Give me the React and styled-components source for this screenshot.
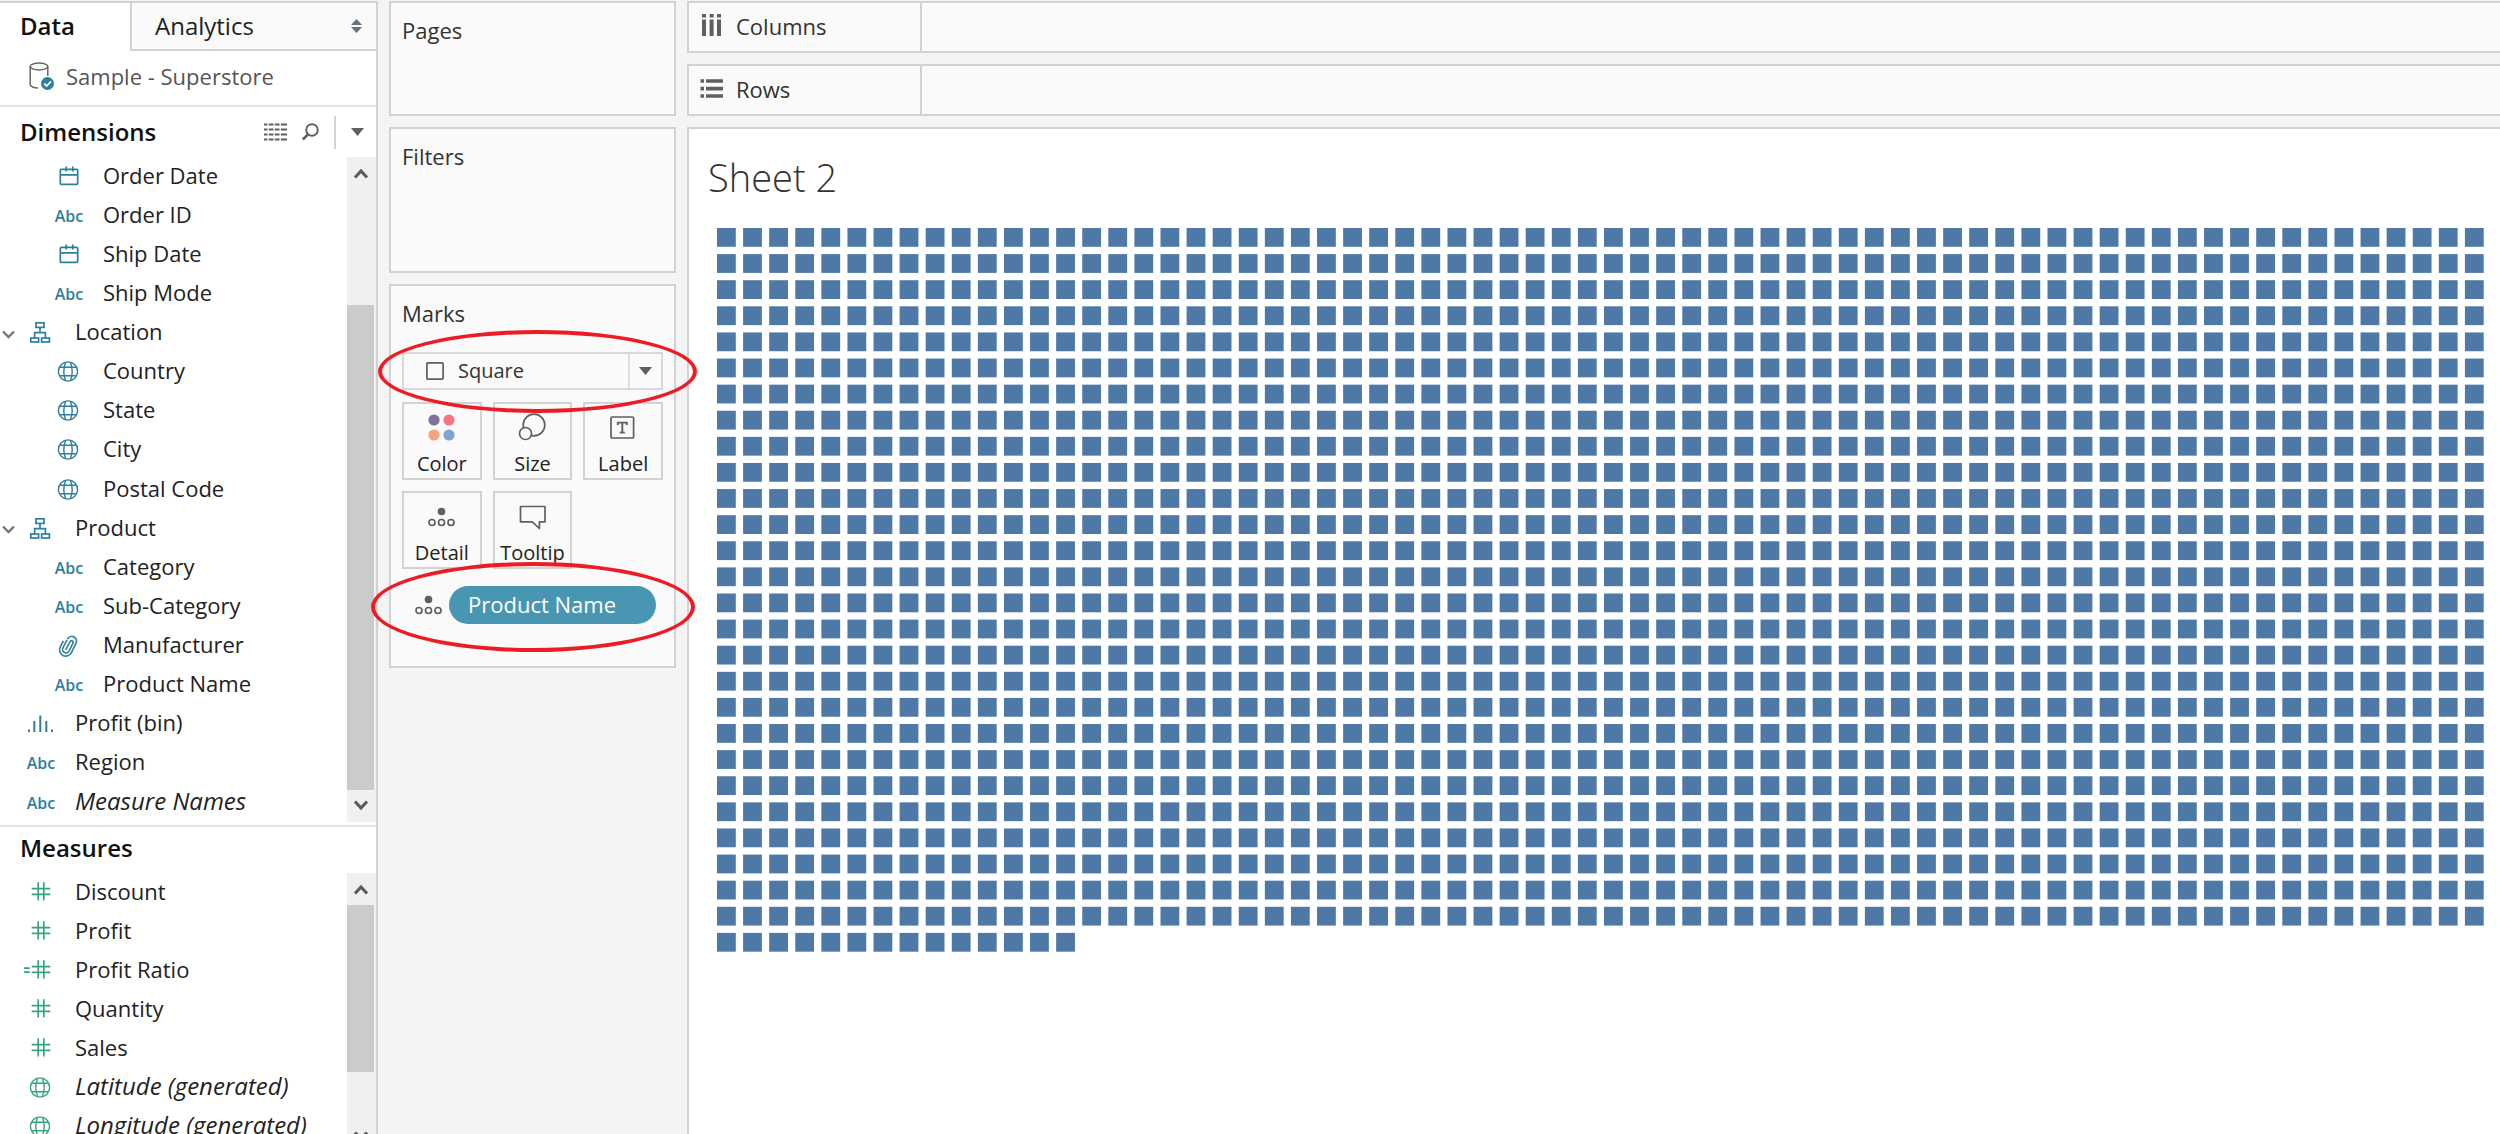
import React from "react";
import styled, { createGlobalStyle, css } from "styled-components";

const FONT = '"Open Sans", "Noto Sans", sans-serif';
const LINE = "#d2d2d2";
const TEAL = "#2d7f9d";
const GREEN = "#35a57c";
const INK = "#5f5f5f";

const GlobalStyle = createGlobalStyle`
  *, *::before, *::after { box-sizing: border-box; }
  body { margin: 0; background: #f4f4f4; font-family: ${FONT}; color: #222; }
  button, select { font: inherit; color: inherit; background: none; border: 0; padding: 0; margin: 0; }
  h1, h2, p, ul { margin: 0; padding: 0; font-weight: inherit; }
  svg { display: block; flex: none; overflow: visible; }
`;

const Workbook = styled.main`
  display: flex;
  height: 100vh;
  overflow: hidden;
  padding-top: 1px;
`;

/* ---------- data pane ---------- */

const DataPane = styled.aside`
  display: flex;
  flex-direction: column;
  flex: none;
  width: 378px;
  background: #fff;
  border-right: 2px solid ${LINE};
`;

const Tabs = styled.div`
  display: flex;
  flex: none;
  height: 50px;
`;

const Tab = styled.button`
  display: flex;
  align-items: center;
  justify-content: space-between;
  border-top: 2px solid ${LINE};
  font-size: 24px;
  line-height: 30px;
  ${(p) =>
    p.$active
      ? css`
          width: 130px;
          padding: 0 0 2px 20px;
          font-weight: 600;
          color: #111;
        `
      : css`
          flex: 1;
          padding: 0 14px 0 23px;
          border-left: 2px solid ${LINE};
          border-bottom: 2px solid ${LINE};
          background: #fafafa;
        `}
`;

const Source = styled.button`
  display: flex;
  align-items: center;
  flex: none;
  gap: 12px;
  height: 56px;
  padding: 0 0 4px 29px;
  border-bottom: 2px solid #e2e2e2;
  font-size: 22px;
  line-height: 30px;
  color: #555;
`;

const Section = styled.section`
  display: flex;
  flex-direction: column;
  min-height: 0;
  flex: ${(p) => (p.$fill ? "1" : "none")};
  ${(p) =>
    !p.$fill &&
    css`
      padding-bottom: 3px;
      border-bottom: 2px solid #e2e2e2;
    `}
`;

const SectionHead = styled.header`
  display: flex;
  align-items: center;
  flex: none;
  height: ${(p) => (p.$tools ? "50px" : "46px")};
  padding: ${(p) => (p.$tools ? "0 12px 0 20px" : "0 12px 4px 20px")};
`;

const SectionTitle = styled.h2`
  flex: 1;
  font-size: 24px;
  line-height: 32px;
  font-weight: 600;
  color: #111;
`;

const Tool = styled.button`
  display: flex;
  margin-left: 15px;
`;

const ToolDivider = styled.span`
  width: 2px;
  height: 33px;
  margin-left: 15px;
  background: ${LINE};
`;

const FieldArea = styled.div`
  display: flex;
  flex: none;
  height: ${(p) => (p.$fill ? "280px" : "665px")};
`;

const FieldList = styled.ul`
  display: flex;
  flex-direction: column;
  flex: 1;
  min-width: 0;
  overflow: hidden;
  list-style: none;
`;

const Field = styled.li`
  display: flex;
  align-items: center;
  flex: ${(p) => (p.$stretch ? "1" : "0 0 39px")};
  padding: 0 0 2px ${(p) => (p.$level ? "51px" : "23px")};
  position: relative;
  white-space: nowrap;
`;

const FieldName = styled.span`
  padding-bottom: 2px;
  font-size: ${(p) => (p.$generated ? "24px" : "22px")};
  line-height: 30px;
  font-style: ${(p) => (p.$generated ? "italic" : "normal")};
`;

const Twisty = styled.button`
  position: absolute;
  left: 2px;
  top: 16px;
`;

const IconSlot = styled.span`
  display: flex;
  align-items: center;
  justify-content: center;
  flex: none;
  width: 36px;
  height: 30px;
  margin-right: 16px;
  color: ${(p) => (p.$measure ? GREEN : TEAL)};
`;

const Abc = styled.span`
  padding-top: 2px;
  font-size: 16px;
  line-height: 24px;
  font-weight: 600;
`;

const Scrollbar = styled.div`
  display: flex;
  flex-direction: column;
  flex: none;
  width: 29px;
  padding-right: 2px;
  background: #f0f0f0;
`;

const ScrollButton = styled.button`
  display: flex;
  align-items: center;
  justify-content: center;
  flex: none;
  height: 32px;
`;

const ScrollSpace = styled.div`
  flex: ${(p) => p.$grow};
`;

const ScrollThumb = styled.div`
  flex: ${(p) => p.$grow};
  background: #cbcbcb;
`;

/* ---------- cards ---------- */

const Cards = styled.div`
  display: flex;
  flex-direction: column;
  flex: none;
  gap: 11px;
  width: 309px;
  padding: 0 11px;
`;

const Card = styled.section`
  position: relative;
  flex: none;
  min-height: ${(p) => p.$height};
  padding: 12px 11px 0;
  border: 2px solid ${LINE};
  background: #fafafa;
`;

const CardTitle = styled.h2`
  font-size: 22px;
  line-height: 30px;
  color: #333;
`;

const MarkType = styled.label`
  display: flex;
  align-items: center;
  height: 38px;
  margin-top: 24px;
  border: 2px solid #d8d8d8;
  padding-left: 22px;
`;

const MarkSelect = styled.select`
  appearance: none;
  flex: 1;
  min-width: 0;
  padding-left: 14px;
  font-size: 20px;
  line-height: 30px;
  color: #333;
`;

const MarkArrow = styled.span`
  display: flex;
  align-items: center;
  justify-content: center;
  align-self: stretch;
  width: 33px;
  border-left: 2px solid #dedede;
`;

const Shelves = styled.div`
  display: grid;
  grid-template-columns: repeat(3, 1fr);
  gap: 11px;
  margin-top: 12px;
`;

const ShelfButton = styled.button`
  display: flex;
  flex-direction: column;
  align-items: center;
  justify-content: space-between;
  height: 78px;
  padding: 9px 0 0;
  border: 2px solid ${LINE};
  font-size: 20px;
  line-height: 28px;
  color: #222;
`;

const PillRow = styled.div`
  display: flex;
  align-items: center;
  gap: 7px;
  margin-top: 17px;
  padding: 0 7px 0 13px;
`;

const Pill = styled.button`
  flex: 1;
  height: 38px;
  padding: 0 0 2px 19px;
  border-radius: 19px;
  background: #4996b2;
  color: #fff;
  font-size: 22px;
  line-height: 30px;
  font-weight: 500;
  text-align: left;
`;

const Ring = styled.span`
  position: absolute;
  left: ${(p) => p.$left};
  top: ${(p) => p.$top};
  width: ${(p) => p.$width};
  height: ${(p) => p.$height};
  border: 4px solid #ed1c24;
  border-radius: 50%;
  pointer-events: none;
  z-index: 2;
`;

/* ---------- sheet ---------- */

const Worksheet = styled.div`
  display: flex;
  flex-direction: column;
  flex: 1;
  min-width: 0;
  gap: 11px;
`;

const Shelf = styled.div`
  display: flex;
  flex: none;
  height: 52px;
  border: 2px solid ${LINE};
  border-right: 0;
  background: #fafafa;
`;

const ShelfLabel = styled.div`
  display: flex;
  align-items: center;
  gap: 12px;
  width: 233px;
  padding: 0 0 2px 11px;
  border-right: 2px solid ${LINE};
  font-size: 22px;
  line-height: 30px;
  color: #333;
`;

const View = styled.section`
  flex: 1;
  min-height: 0;
  padding: 24px 9px 0 19px;
  border: 2px solid ${LINE};
  border-right: 0;
  border-bottom: 0;
  background: #fff;
`;

const ViewTitle = styled.h1`
  font-size: 38px;
  line-height: 48px;
  font-weight: 300;
  color: #333;
`;

const Chart = styled.svg`
  width: 100%;
  height: auto;
  margin-top: 27px;
  padding-left: 9px;
  fill: #4e79a7;
`;

/* ---------- icons ---------- */

const Svg = ({ w, h, children, ...rest }) => (
  <svg width={w} height={h} viewBox={`0 0 ${w} ${h}`} fill="none" stroke="currentColor" strokeWidth="1.7" aria-hidden="true" {...rest}>
    {children}
  </svg>
);

const CalendarIcon = () => (
  <Svg w={36} h={30}>
    <rect x="9.3" y="8.3" width="17.4" height="15" rx="1" />
    <path d="M9.3 13.8H26.7M15.2 5.5V10.5M21.8 5.5V10.5" />
  </Svg>
);

const GlobeIcon = () => (
  <Svg w={36} h={30} strokeWidth="1.4">
    <circle cx="17" cy="15.5" r="9.6" />
    <path d="M8.3 11.3H25.7M8.3 19.7H25.7M14.6 6.2C12.4 12 12.4 19 14.6 24.8M19.4 6.2C21.6 12 21.6 19 19.4 24.8" />
  </Svg>
);

const HierarchyIcon = () => (
  <Svg w={36} h={30}>
    <rect x="13" y="5.8" width="8" height="4.6" />
    <rect x="7.8" y="21" width="7.8" height="4" />
    <rect x="18.6" y="21" width="7.8" height="4" />
    <path d="M17 10.4V15.6M11.6 21V15.6H22.4V21" />
  </Svg>
);

const ClipIcon = () => (
  <Svg w={36} h={30} strokeWidth="1.6">
    <g transform="translate(17 15.5) rotate(27)">
      <path d="M3.4 -5.5V4.5A3.4 3.4 0 0 1 -3.4 4.5V-4.5M0 5V-4.2A1.8 1.8 0 0 1 3.4 -5M-6.2 -2V5A6.2 6.2 0 0 0 6.2 5V-5.5A4.8 4.8 0 0 0 -3.4 -5.5" />
    </g>
  </Svg>
);

const BinIcon = () => (
  <Svg w={36} h={30} strokeWidth="2">
    <path d="M6 21.4V24M11.3 13V24M17.3 7.5V24M23.3 13V24M29 21.4V24" />
  </Svg>
);

const HashIcon = ({ calculated }) => (
  <Svg w={36} h={30}>
    <path d="M8.7 11.6H27.3M8.7 17.4H27.3M15.2 5.2V23.5M20.8 5.2V23.5" />
    {calculated && <path d="M1 13.2H6.8M1 17.2H6.8" />}
  </Svg>
);

const ICONS = {
  date: <CalendarIcon />,
  text: <Abc>Abc</Abc>,
  geo: <GlobeIcon />,
  tree: <HierarchyIcon />,
  clip: <ClipIcon />,
  bin: <BinIcon />,
  number: <HashIcon />,
  calc: <HashIcon calculated />,
};

const Chevron = ({ up }) => (
  <Svg w={14} h={12} stroke="#5c5c5c" strokeWidth="3.2">
    <path d={up ? "M1 10.5L7 4L13 10.5" : "M1 1.5L7 8L13 1.5"} />
  </Svg>
);

const Caret = () => (
  <svg width="13" height="8" viewBox="0 0 13 8" aria-hidden="true">
    <path d="M0 0H13L6.5 8Z" fill={INK} />
  </svg>
);

const DetailIcon = () => (
  <Svg w={27} h={20} stroke={INK} strokeWidth="1.7">
    <circle cx="13.5" cy="4.5" r="3.8" fill={INK} stroke="none" />
    <circle cx="4" cy="15.5" r="3" />
    <circle cx="13.5" cy="15.5" r="3" />
    <circle cx="23" cy="15.5" r="3" />
  </Svg>
);

const SHELF_ICONS = {
  Color: (
    <svg width="28" height="28" viewBox="0 0 28 28" aria-hidden="true">
      <circle cx="6" cy="7" r="5.6" fill="#84709a" />
      <circle cx="21" cy="7" r="5.6" fill="#f77583" />
      <circle cx="6" cy="22" r="5.6" fill="#f2a57c" />
      <circle cx="21" cy="22" r="5.6" fill="#80a4cb" />
    </svg>
  ),
  Size: (
    <Svg w={28} h={28} stroke={INK}>
      <circle cx="16" cy="12" r="10.8" />
      <circle cx="7.5" cy="20.5" r="6" fill="#fafafa" />
    </Svg>
  ),
  Label: (
    <Svg w={26} h={28} stroke={INK}>
      <rect x="1" y="4" width="22.6" height="21" rx="1" />
      <path d="M7.8 12V9.6H16.8V12M12.3 9.6V19.4M9.8 19.6H14.8" strokeWidth="1.9" />
    </Svg>
  ),
  Detail: (
    <Svg w={27} h={28} stroke={INK}>
      <circle cx="13.5" cy="9.5" r="3.8" fill={INK} stroke="none" />
      <circle cx="4" cy="20.5" r="3" />
      <circle cx="13.5" cy="20.5" r="3" />
      <circle cx="23" cy="20.5" r="3" />
    </Svg>
  ),
  Tooltip: (
    <Svg w={28} h={28} stroke={INK}>
      <path d="M2.5 4.5H27V19.8H21.4V26.5L14.2 19.8H2.5Z" strokeLinejoin="round" />
    </Svg>
  ),
};

/* ---------- data ---------- */

const DIMENSIONS = [
  ["Order Date", "date", 1],
  ["Order ID", "text", 1],
  ["Ship Date", "date", 1],
  ["Ship Mode", "text", 1],
  ["Location", "tree", 0],
  ["Country", "geo", 1],
  ["State", "geo", 1],
  ["City", "geo", 1],
  ["Postal Code", "geo", 1],
  ["Product", "tree", 0],
  ["Category", "text", 1],
  ["Sub-Category", "text", 1],
  ["Manufacturer", "clip", 1],
  ["Product Name", "text", 1],
  ["Profit (bin)", "bin", 0],
  ["Region", "text", 0],
  ["Measure Names", "text", 0, true],
];

const MEASURES = [
  ["Discount", "number", 0],
  ["Profit", "number", 0],
  ["Profit Ratio", "calc", 0],
  ["Quantity", "number", 0],
  ["Sales", "number", 0],
  ["Latitude (generated)", "geo", 0, true],
  ["Longitude (generated)", "geo", 0, true],
];

const PRODUCTS = 1850;
const PER_ROW = 68;
const ROWS = Math.ceil(PRODUCTS / PER_ROW);
const CHART_W = 1774;
const CHART_H = 731;

function Fields({ items, measure, fill, scroll }) {
  return (
    <FieldArea $fill={fill}>
      <FieldList>
        {items.map(([name, icon, level, generated]) => (
          <Field key={name} $level={level} $stretch={!fill}>
            {icon === "tree" && (
              <Twisty aria-label={`Collapse ${name}`}>
                <Svg w={13} h={9} stroke="#777" strokeWidth="2.4">
                  <path d="M1 1.5L6.5 7L12 1.5" />
                </Svg>
              </Twisty>
            )}
            <IconSlot $measure={measure}>{ICONS[icon]}</IconSlot>
            <FieldName $generated={generated}>{name}</FieldName>
          </Field>
        ))}
      </FieldList>
      <Scrollbar>
        <ScrollButton aria-label="Scroll up"><Chevron up /></ScrollButton>
        <ScrollSpace $grow={scroll[0]} />
        <ScrollThumb $grow={scroll[1]} />
        <ScrollSpace $grow={scroll[2]} />
        <ScrollButton aria-label="Scroll down"><Chevron /></ScrollButton>
      </Scrollbar>
    </FieldArea>
  );
}

function MarkGrid() {
  const stepX = CHART_W / PER_ROW;
  const stepY = CHART_H / ROWS;
  return (
    <Chart viewBox={`0 0 ${CHART_W} ${CHART_H}`} role="img" aria-label="One square per product">
      {Array.from({ length: PRODUCTS }, (_, i) => (
        <rect key={i} x={(i % PER_ROW) * stepX} y={Math.floor(i / PER_ROW) * stepY} width="18.8" height="18.8" />
      ))}
    </Chart>
  );
}

export default function App() {
  return (
    <>
      <GlobalStyle />
      <Workbook>
        <DataPane>
          <Tabs>
            <Tab $active>Data</Tab>
            <Tab>
              Analytics
              <svg width="11" height="14" viewBox="0 0 11 14" aria-hidden="true">
                <path d="M0 6L5.5 0L11 6ZM0 8H11L5.5 14Z" fill="#66727e" />
              </svg>
            </Tab>
          </Tabs>
          <Source>
            <Svg w={25} h={28} stroke="#666" strokeWidth="1.5">
              <ellipse cx="10" cy="4.5" rx="8.8" ry="3.4" />
              <path d="M1.2 4.5V22.5C1.2 24.5 5 26 9 26M18.8 4.5V14" />
              <circle cx="18.5" cy="21.5" r="6.5" fill={TEAL} stroke="none" />
              <path d="M15.2 21.6L17.7 24L22 19.4" stroke="#fff" strokeWidth="1.8" />
            </Svg>
            Sample - Superstore
          </Source>
          <Section>
            <SectionHead $tools>
              <SectionTitle>Dimensions</SectionTitle>
              <Tool aria-label="View as list">
                <Svg w={23} h={18} stroke={INK} strokeWidth="1.8">
                  <path d="M0 1.5H23M0 6.5H23M0 11.5H23M0 16.5H23" strokeDasharray="3.5 1.3 4.7 1.3 4.7 1.3 6.2 1" />
                </Svg>
              </Tool>
              <Tool aria-label="Find field">
                <Svg w={17} h={18} stroke={INK} strokeWidth="1.9">
                  <circle cx="10" cy="7" r="5.8" />
                  <path d="M6 11.3L0.8 16.5" strokeWidth="2.6" />
                </Svg>
              </Tool>
              <ToolDivider />
              <Tool aria-label="Dimensions menu"><Caret /></Tool>
            </SectionHead>
            <Fields items={DIMENSIONS} scroll={[116, 485, 0]} />
          </Section>
          <Section $fill>
            <SectionHead>
              <SectionTitle>Measures</SectionTitle>
            </SectionHead>
            <Fields items={MEASURES} measure fill scroll={[0, 167, 49]} />
          </Section>
        </DataPane>

        <Cards>
          <Card $height="115px"><CardTitle>Pages</CardTitle></Card>
          <Card $height="146px"><CardTitle>Filters</CardTitle></Card>
          <Card $height="384px">
            <CardTitle>Marks</CardTitle>
            <MarkType>
              <Svg w={18} h={18} stroke={INK}>
                <rect x="0.9" y="0.9" width="16.2" height="16.2" rx="1" />
              </Svg>
              <MarkSelect aria-label="Mark type" defaultValue="Square">
                <option>Square</option>
              </MarkSelect>
              <MarkArrow><Caret /></MarkArrow>
            </MarkType>
            <Shelves>
              {Object.entries(SHELF_ICONS).map(([name, icon]) => (
                <ShelfButton key={name}>
                  {icon}
                  {name}
                </ShelfButton>
              ))}
            </Shelves>
            <PillRow>
              <DetailIcon />
              <Pill>Product Name</Pill>
            </PillRow>
            <Ring $left="-13px" $top="44px" $width="319px" $height="83px" />
            <Ring $left="-20px" $top="276px" $width="324px" $height="90px" />
          </Card>
        </Cards>

        <Worksheet>
          <Shelf>
            <ShelfLabel>
              <svg width="24" height="26" viewBox="0 0 24 26" aria-hidden="true">
                <path d="M2 1h4v3.5H2zM9.6 1h4v3.5h-4zM17 1h4v3.5h-4zM2 6.6h4V23H2zM9.6 6.6h4V23h-4zM17 6.6h4V23h-4z" fill={INK} />
              </svg>
              Columns
            </ShelfLabel>
          </Shelf>
          <Shelf>
            <ShelfLabel>
              <svg width="24" height="26" viewBox="0 0 24 26" aria-hidden="true">
                <path d="M.5 3.2h3.5v3.6H.5zM.5 10.8h3.5v3.6H.5zM.5 18.2h3.5v3.6H.5zM6 3.2h17v3.6H6zM6 10.8h17v3.6H6zM6 18.2h17v3.6H6z" fill={INK} />
              </svg>
              Rows
            </ShelfLabel>
          </Shelf>
          <View>
            <ViewTitle>Sheet 2</ViewTitle>
            <MarkGrid />
          </View>
        </Worksheet>
      </Workbook>
    </>
  );
}
